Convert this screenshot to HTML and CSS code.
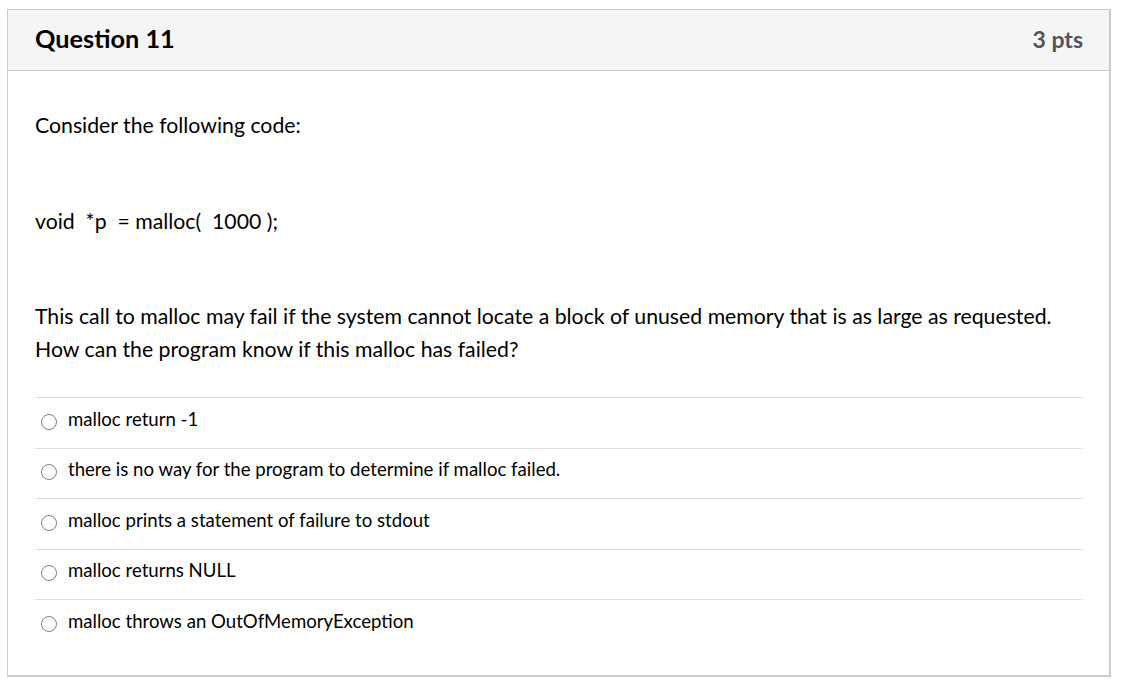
FILE: index.html
```
<!DOCTYPE html>
<html lang="en">
<head>
    <meta charset="UTF-8">
    <title>Question 11</title>
    <link rel="stylesheet" href="styles.css">
</head>
<body>

<div class="question">
    <div class="question-header">
        <span class="question-name">Question 11</span>
        <span class="question-points">3 pts</span>
    </div>
    <div class="question-body">
        <p class="question-text first">Consider the following code:</p>
        <p class="question-text">void&nbsp; *p&nbsp; = malloc(&nbsp; 1000 );</p>
        <p class="question-text last">This call to malloc may fail if the system cannot locate a block of unused memory that is as large as requested. How can the program know if this malloc has failed?</p>

        <div class="answers">
            <label class="answer"><span class="radio"></span>malloc return -1</label>
            <label class="answer"><span class="radio"></span>there is no way for the program to determine if malloc failed.</label>
            <label class="answer"><span class="radio"></span>malloc prints a statement of failure to stdout</label>
            <label class="answer"><span class="radio"></span>malloc returns NULL</label>
            <label class="answer"><span class="radio"></span>malloc throws an OutOfMemoryException</label>
        </div>
    </div>
</div>

</body>
</html>
```

FILE: styles.css
```
body {
    font-family: Lato, 'Liberation Sans', sans-serif;
    color: #000;
    background: #fff;
    margin: 0;
    padding: 9px 12px 0 7px;
}
.question {
    border: 2px solid #c7cdd1;
    border-top-width: 1px;
    border-left-width: 1px;
    background: #fff;
}
.question-header {
    display: flex;
    justify-content: space-between;
    align-items: center;
    height: 61px;
    padding: 0 26px 5px 27px;
    box-sizing: border-box;
    background: #f5f5f5;
    border-bottom: 1px solid #c7cdd1;
}
.question-name {
    font-size: 25.3px;
    font-weight: bold;
    color: #000;
}
.question-points {
    font-size: 23px;
    font-weight: bold;
    color: #555;
    padding-top: 3px;
}
.question-body {
    padding: 38px 26px 24px 27px;
}
.question-text {
    margin: 0 0 62px;
    font-size: 21.25px;
    line-height: 33px;
}
.question-text.first {
    margin-bottom: 63px;
}
.question-text.last {
    margin-bottom: 31px;
}
.answers {
    border-top: 1px solid #e0e0e0;
}
.answer {
    display: flex;
    align-items: center;
    height: 50.5px;
    box-sizing: border-box;
    padding: 0 6px 8px;
    border-bottom: 1px solid #e0e0e0;
    font-size: 18.6px;
}
.answer:last-child {
    border-bottom: none;
}
.radio {
    width: 14px;
    height: 14px;
    margin: 6px 11px 0 0;
    border: 1px solid #808080;
    border-radius: 50%;
    flex-shrink: 0;
}
```
